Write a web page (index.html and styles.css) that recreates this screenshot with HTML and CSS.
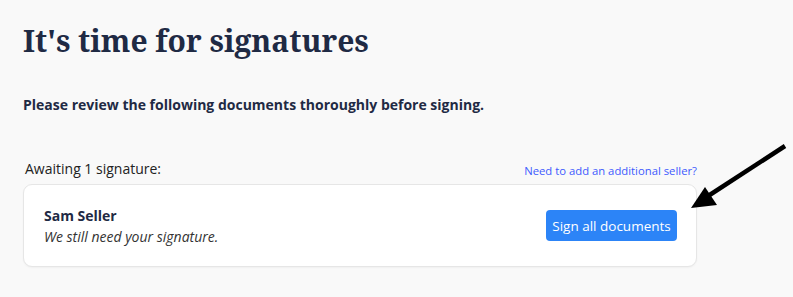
FILE: index.html
```html
<!DOCTYPE html>
<html>
<head>
<meta charset="utf-8">
<link rel="stylesheet" href="styles.css">
</head>
<body>
<main class="page">
  <h1 class="title">It's time for signatures</h1>
  <p class="intro">Please review the following documents thoroughly before signing.</p>
  <div class="section-head">
    <span class="awaiting">Awaiting 1 signature:</span>
    <a class="add-link" href="#">Need to add an additional seller?</a>
  </div>
  <div class="card">
    <div class="signer">
      <div class="signer-name">Sam Seller</div>
      <div class="signer-note">We still need your signature.</div>
    </div>
    <button class="sign-btn">Sign all documents</button>
  </div>
</main>
<svg class="arrow" width="793" height="297" viewBox="0 0 793 297">
  <line x1="785" y1="146" x2="705" y2="198" stroke="#000" stroke-width="4.5"/>
  <polygon points="691,208 705,187 717,205" fill="#000"/>
</svg>
</body>
</html>
```
FILE: styles.css
```css
html, body {
  margin: 0;
  padding: 0;
  background: #f9f9f9;
}
body {
  font-family: "Open Sans", "Noto Sans", sans-serif;
  color: #222;
  position: relative;
  width: 793px;
  height: 297px;
  overflow: hidden;
}
.page {
  padding: 22px 0 0 23px;
  width: 674px;
}
.title {
  font-family: "Noto Serif", "DejaVu Serif", "Liberation Serif", serif;
  font-weight: 700;
  font-size: 30px;
  line-height: 38px;
  color: #1f2a44;
  margin: 0;
}
.intro {
  font-size: 14px;
  font-weight: 700;
  color: #1f2a44;
  margin: 35px 0 0 0;
  line-height: 20px;
}
.section-head {
  display: flex;
  justify-content: space-between;
  align-items: flex-end;
  margin-top: 44px;
  padding-left: 2px;
}
.awaiting {
  font-size: 14px;
  line-height: 20px;
  color: #222;
}
.add-link {
  font-size: 11.3px;
  line-height: 16px;
  color: #3d5afe;
  text-decoration: none;
}
.card {
  margin-top: 5px;
  background: #fff;
  border: 1px solid #e6e6e6;
  border-radius: 9px;
  box-shadow: 0 1px 2px rgba(0,0,0,0.04);
  height: 83px;
  box-sizing: border-box;
  display: flex;
  align-items: center;
  justify-content: space-between;
  padding: 2px 19px 0 20px;
}
.signer-name {
  font-size: 14px;
  font-weight: 700;
  color: #1f2a44;
  line-height: 20px;
}
.signer-note {
  font-size: 14px;
  font-style: italic;
  color: #333;
  line-height: 21px;
}
.sign-btn {
  font-family: "Open Sans", "Noto Sans", sans-serif;
  font-size: 13.5px;
  color: #fff;
  background: #2c84f7;
  border: none;
  border-radius: 4px;
  width: 131px;
  height: 31px;
  padding: 0;
  margin-top: -2px;
}
.arrow {
  position: absolute;
  left: 0;
  top: 0;
  pointer-events: none;
}
```
